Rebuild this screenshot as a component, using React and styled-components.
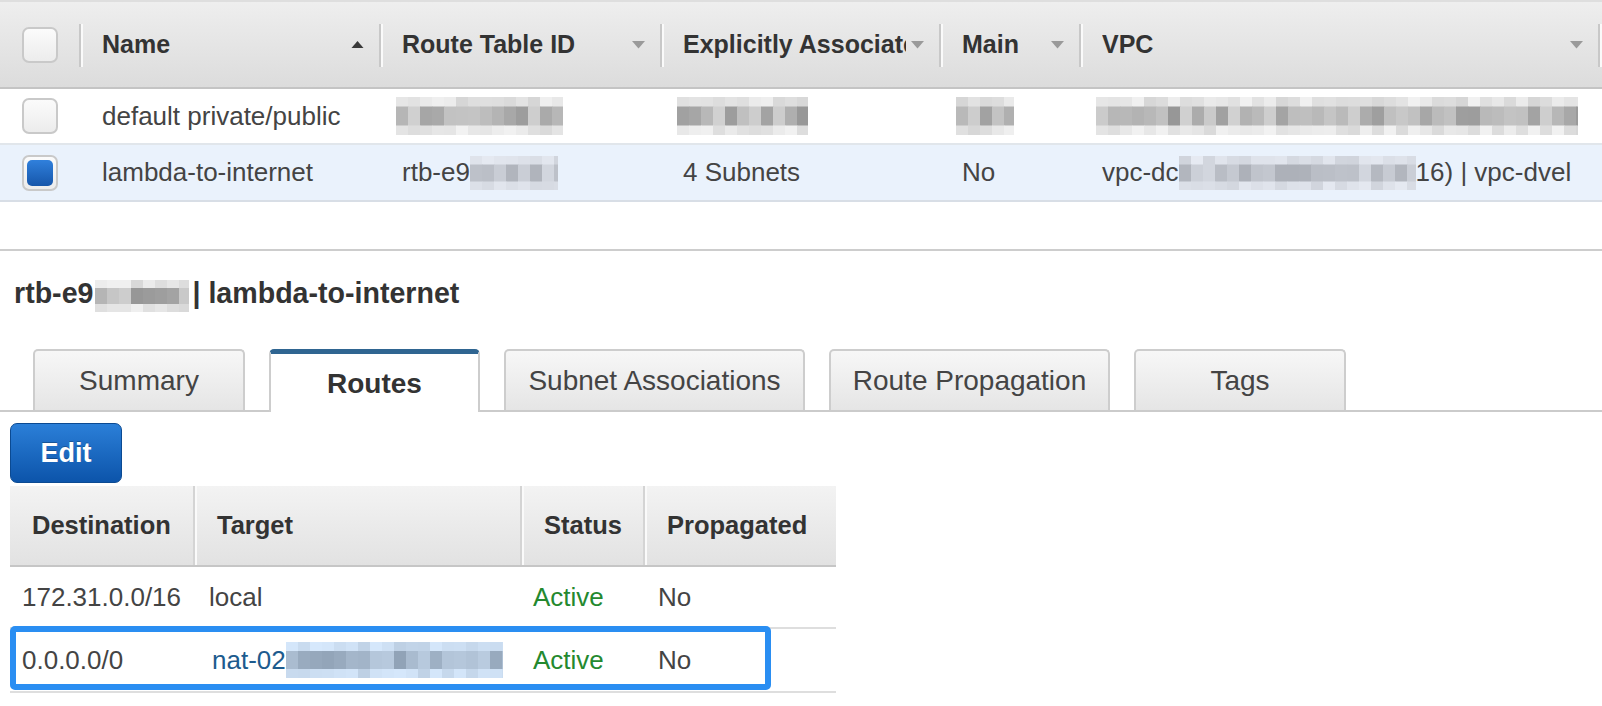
import React from "react";
import styled, { createGlobalStyle, css } from "styled-components";

const GlobalStyle = createGlobalStyle`
  html, body {
    margin: 0;
    padding: 0;
    background: #fff;
  }
  body {
    font-family: "Liberation Sans", Arial, Helvetica, sans-serif;
    color: #444;
  }
`;

const LIST_COLS = "80px 300px 281px 279px 140px 519px 1fr";
const ROUTE_COLS = "185px 327px 123px 191px";

// pixelated redaction block, like the blurred ids in the screenshot
const TONES = {
  gray: { mid: [150, 210], edge: [214, 242], tint: [0, 0, 0] },
  soft: { mid: [176, 216], edge: [212, 234], tint: [-4, 0, 8] },
  blue: { mid: [170, 215], edge: [218, 242], tint: [-28, -10, 10] },
};

const Blur = ({ width, height = 36, seed = 7, tone = "gray" }) => {
  let s = seed * 131 + 17;
  const rnd = () => {
    s = (s * 9301 + 49297) % 233280;
    return s / 233280;
  };
  const t = TONES[tone];
  const cell = 12;
  const cols = Math.ceil(width / cell);
  const rows = [
    { y: 0, h: height * 0.25, range: t.edge },
    { y: height * 0.25, h: height * 0.5, range: t.mid },
    { y: height * 0.75, h: height * 0.25, range: t.edge },
  ];
  const rects = [];
  rows.forEach((r, ri) => {
    for (let c = 0; c < cols; c++) {
      const v = Math.round(r.range[0] + rnd() * (r.range[1] - r.range[0]));
      const col = `rgb(${Math.min(255, v + t.tint[0])},${Math.min(255, v + t.tint[1])},${Math.min(255, v + t.tint[2])})`;
      rects.push(
        <rect key={`${ri}-${c}`} x={c * cell} y={r.y} width={cell + 0.5} height={r.h + 0.5} fill={col} />
      );
    }
  });
  return (
    <svg width={width} height={height} viewBox={`0 0 ${width} ${height}`} style={{ display: "block", flexShrink: 0 }}>
      {rects}
    </svg>
  );
};

const Page = styled.div`
  width: 1602px;
  min-height: 706px;
  background: #fff;
  overflow: hidden;
`;

/* ---------- top list ---------- */

const ListHead = styled.div`
  display: grid;
  grid-template-columns: ${LIST_COLS};
  height: 85px;
  border-top: 2px solid #dedede;
  border-bottom: 2px solid #c4c4c4;
  background: linear-gradient(#eeeeee, #dcdcdc);
`;

const HeadCell = styled.div`
  position: relative;
  display: flex;
  align-items: center;
  gap: 4px;
  padding: ${(p) => (p.$filler ? "0" : "0 15px 0 22px")};
  font-size: 25px;
  font-weight: bold;
  color: #333;
  ${(p) =>
    p.$divider &&
    css`
      &::before {
        content: "";
        position: absolute;
        left: -1px;
        top: 22px;
        bottom: 20px;
        width: 2px;
        background: #c8c8c8;
        box-shadow: 2px 0 0 #fafafa;
      }
    `}
`;

const HeadLabel = styled.span`
  flex: 1;
  min-width: 0;
  overflow: hidden;
  white-space: nowrap;
`;

const SortArrow = ({ up }) => (
  <svg width="15" height="9" viewBox="0 0 15 9" style={{ flexShrink: 0 }}>
    {up ? <path d="M7.5 1 L13.5 8 L1.5 8 Z" fill="#3a3a3a" /> : <path d="M1 1 L14 1 L7.5 8.5 Z" fill="#9a9a9a" />}
  </svg>
);

const ListRow = styled.div`
  display: grid;
  grid-template-columns: ${LIST_COLS};
  height: ${(p) => (p.$selected ? "55px" : "54px")};
  background: ${(p) => (p.$selected ? "#eaf2fc" : "#fff")};
  border-bottom: 2px solid ${(p) => (p.$selected ? "#d8dee6" : "#e1e6eb")};
`;

const Cell = styled.div`
  display: flex;
  align-items: center;
  padding-left: ${(p) => (p.$shift ? "16px" : "22px")};
  font-size: 26px;
  color: #444;
  white-space: nowrap;
  overflow: hidden;
`;

const Check = styled.span`
  box-sizing: border-box;
  width: 36px;
  height: 36px;
  border-radius: 7px;
  border: 2px solid #c9c9c9;
  background: linear-gradient(#fbfbfb, #ececec);
  display: flex;
  align-items: center;
  justify-content: center;
  &::after {
    content: "";
    display: ${(p) => (p.$checked ? "block" : "none")};
    width: 26px;
    height: 26px;
    border-radius: 5px;
    background: linear-gradient(#3080dc, #1656aa);
  }
`;

/* ---------- detail pane ---------- */

const Separator = styled.div`
  margin-top: 47px;
  height: 2px;
  background: #cdcdcd;
`;

const Title = styled.h2`
  display: flex;
  align-items: center;
  margin: 25px 0 0 14px;
  height: 34px;
  font-size: 28.6px;
  font-weight: bold;
  color: #333;
  white-space: nowrap;
`;

const TitleBlur = styled.span`
  margin: 6px 3px 0 2px;
`;

const TabBar = styled.div`
  display: flex;
  align-items: flex-end;
  gap: 24px;
  margin-top: 39px;
  padding-left: 33px;
  border-bottom: 2px solid #cbcbcb;
`;

const Tab = styled.div`
  box-sizing: border-box;
  display: flex;
  align-items: center;
  justify-content: center;
  width: ${(p) => p.$w}px;
  height: 61px;
  border: 2px solid #cdcdcd;
  border-bottom: 0;
  border-radius: 5px 5px 0 0;
  background: linear-gradient(#f7f7f7, #e5e5e5);
  font-size: 28px;
  color: #444;
  white-space: nowrap;
  ${(p) =>
    p.$active &&
    css`
      height: 63px;
      margin-bottom: -2px;
      padding-top: 2px;
      border-top: 5px solid #2f6591;
      background: #fff;
      font-weight: bold;
      color: #333;
    `}
`;

const EditButton = styled.button`
  display: block;
  margin: 11px 0 0 10px;
  width: 112px;
  height: 60px;
  border: 1px solid #0b4a92;
  border-radius: 7px;
  background: linear-gradient(#2b7fd8, #0c54aa);
  color: #fff;
  font-family: inherit;
  font-size: 27px;
  font-weight: bold;
  text-shadow: 0 -1px 0 rgba(0, 0, 0, 0.25);
  padding: 0;
`;

const RouteTable = styled.div`
  margin: 3px 0 0 10px;
  width: 826px;
`;

const RouteHead = styled.div`
  display: grid;
  grid-template-columns: ${ROUTE_COLS};
  height: 79px;
  background: linear-gradient(#f3f3f3, #e2e2e2);
  border-bottom: 2px solid #c6c6c6;
`;

const RouteHeadCell = styled.div`
  display: flex;
  align-items: center;
  padding-left: 22px;
  font-size: 25.5px;
  font-weight: bold;
  color: #333;
  border-right: ${(p) => (p.$last ? "0" : "2px solid #d4d4d4")};
  box-shadow: ${(p) => (p.$last ? "none" : "2px 0 0 #fafafa")};
`;

const RouteRow = styled.div`
  position: relative;
  display: grid;
  grid-template-columns: ${ROUTE_COLS};
  height: ${(p) => p.$h}px;
  border-bottom: 2px solid #dedede;
`;

const RouteCell = styled.div`
  display: flex;
  align-items: center;
  padding-left: ${(p) => p.$pad || 12}px;
  font-size: 26px;
  color: ${(p) => (p.$tone === "green" ? "#24892f" : p.$tone === "link" ? "#1d5b8e" : "#444")};
  white-space: nowrap;
  overflow: hidden;
`;

const Highlight = styled.div`
  position: absolute;
  left: 0;
  top: -3px;
  width: 761px;
  height: 64px;
  box-sizing: border-box;
  border: 6px solid #2a8ef2;
  border-radius: 5px;
  pointer-events: none;
`;

const headers = [
  { label: "Name", up: true },
  { label: "Route Table ID" },
  { label: "Explicitly Associated With" },
  { label: "Main" },
  { label: "VPC" },
];

const tabs = [
  { label: "Summary", w: 212 },
  { label: "Routes", w: 211, active: true },
  { label: "Subnet Associations", w: 301 },
  { label: "Route Propagation", w: 281 },
  { label: "Tags", w: 212 },
];

const App = () => (
  <Page>
    <GlobalStyle />
    <ListHead>
      <HeadCell>
        <Check />
      </HeadCell>
      {headers.map((h) => (
        <HeadCell key={h.label} $divider>
          <HeadLabel>{h.label}</HeadLabel>
          <SortArrow up={h.up} />
        </HeadCell>
      ))}
      <HeadCell $divider $filler />
    </ListHead>

    <ListRow>
      <Cell>
        <Check />
      </Cell>
      <Cell>default private/public</Cell>
      <Cell $shift>
        <Blur width={167} height={38} seed={3} />
      </Cell>
      <Cell $shift>
        <Blur width={131} height={38} seed={11} />
      </Cell>
      <Cell $shift>
        <Blur width={58} height={38} seed={5} />
      </Cell>
      <Cell $shift>
        <Blur width={482} height={38} seed={21} />
      </Cell>
      <Cell />
    </ListRow>

    <ListRow $selected>
      <Cell>
        <Check $checked />
      </Cell>
      <Cell>lambda-to-internet</Cell>
      <Cell>
        rtb-e9
        <Blur width={88} height={34} seed={8} tone="soft" />
      </Cell>
      <Cell>4 Subnets</Cell>
      <Cell>No</Cell>
      <Cell>
        vpc-dc
        <Blur width={237} height={34} seed={14} tone="soft" />
        16) | vpc-dvel
      </Cell>
      <Cell />
    </ListRow>

    <Separator />

    <Title>
      rtb-e9
      <TitleBlur>
        <Blur width={94} height={32} seed={4} />
      </TitleBlur>
      | lambda-to-internet
    </Title>

    <TabBar>
      {tabs.map((t) => (
        <Tab key={t.label} $w={t.w} $active={t.active}>
          {t.label}
        </Tab>
      ))}
    </TabBar>

    <EditButton>Edit</EditButton>

    <RouteTable>
      <RouteHead>
        <RouteHeadCell>Destination</RouteHeadCell>
        <RouteHeadCell>Target</RouteHeadCell>
        <RouteHeadCell>Status</RouteHeadCell>
        <RouteHeadCell $last>Propagated</RouteHeadCell>
      </RouteHead>
      <RouteRow $h={60}>
        <RouteCell>172.31.0.0/16</RouteCell>
        <RouteCell $pad={14}>local</RouteCell>
        <RouteCell $pad={11} $tone="green">
          Active
        </RouteCell>
        <RouteCell $pad={13}>No</RouteCell>
      </RouteRow>
      <RouteRow $h={62}>
        <RouteCell>0.0.0.0/0</RouteCell>
        <RouteCell $pad={17} $tone="link">
          nat-02
          <Blur width={217} height={36} seed={9} tone="blue" />
        </RouteCell>
        <RouteCell $pad={11} $tone="green">
          Active
        </RouteCell>
        <RouteCell $pad={13}>No</RouteCell>
        <Highlight />
      </RouteRow>
    </RouteTable>
  </Page>
);

export default App;
